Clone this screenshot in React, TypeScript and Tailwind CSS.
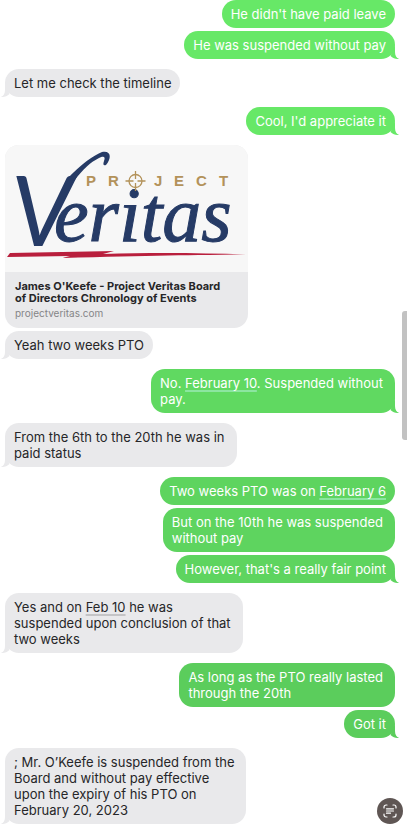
import type { ReactNode } from "react";

const tones = {
  gray: "bg-[#e9e9eb] fill-[#e9e9eb] text-[#262628]",
  lime: "bg-[#67e867] fill-[#67e867] text-white",
  green: "bg-[#60d961] fill-[#60d961] text-white",
  leaf: "bg-[#5ed45f] fill-[#5ed45f] text-white",
  deep: "bg-[#5bcd5c] fill-[#5bcd5c] text-white",
};

type BubbleProps = {
  tone: keyof typeof tones;
  tail?: boolean;
  multiline?: boolean;
  children: ReactNode;
};

function Bubble({ tone, tail, multiline, children }: BubbleProps) {
  const received = tone === "gray";
  return (
    <div
      className={`relative w-fit rounded-[14px] py-1.5 pl-[9px] ${multiline ? "pr-3" : "pr-[9px]"} ${
        received ? "self-start" : "self-end"
      } ${tones[tone]}`}
    >
      <p className="whitespace-nowrap">{children}</p>
      {tail && (
        <svg
          aria-hidden="true"
          viewBox="0 0 14 14"
          className={`absolute bottom-0 size-3.5 ${received ? "-left-1 -scale-x-100" : "-right-1"}`}
        >
          <path d="M10 0V7C10 10.500 11.500 13 14 13.800C11.500 14.400 8 13.500 5.500 11Z" />
        </svg>
      )}
    </div>
  );
}

function DateLink({ sent, children }: { sent?: boolean; children: ReactNode }) {
  return (
    <a
      href="#date"
      className={`underline decoration-2 underline-offset-2 [text-decoration-skip-ink:none] ${
        sent ? "decoration-[#8be6a0]" : "decoration-[#c4c4c6]"
      }`}
    >
      {children}
    </a>
  );
}

function Logo() {
  return (
    <svg viewBox="0 0 243 127" className="block w-full bg-[#f7f7f7]" role="img" aria-label="Project Veritas">
      <g fill="#263b66" stroke="#263b66" fontStyle="italic">
        <text x="6" y="101" fontFamily="Lato, sans-serif" fontSize="98" strokeWidth="0">V</text>
        <text x="49" y="96" fontFamily="'Liberation Serif', serif" fontSize="78" strokeWidth="1">eritas</text>
      </g>
      <path
        d="M62 34C76 19 89 10 97 7C106 5 107 13 101 20C98 21 98 19 99 16C101 11 98 11 94 13C86 17 78 24 69 36Z"
        fill="#263b66"
      />
      <g fill="#b3925a" fontFamily="'Liberation Sans', sans-serif" fontWeight="bold" fontSize="15">
        <text x="81 103" y="41">PR</text>
        <text x="149 169 191 214" y="41">JECT</text>
      </g>
      <g fill="none" stroke="#b3925a" strokeWidth="1.300">
        <circle cx="130.500" cy="36" r="6.500" />
        <path d="M130.500 26v8M130.500 38v8M120.500 36h8M132.500 36h8" />
      </g>
      <path
        d="M5 108L109 106L98 109C150 107.500 195 108 241 109.500C190 110 145 110.500 57 113L65 111L2 112Z"
        fill="#b91f3d"
      />
    </svg>
  );
}

function LinkCard() {
  return (
    <a href="#projectveritas" className="block w-[243px] self-start overflow-hidden rounded-[14px] bg-[#e9e9eb]">
      <Logo />
      <div className="px-2.5 pt-2 pb-2">
        <h2 className="text-[11px] leading-3 font-bold whitespace-nowrap text-[#262628]">
          James O'Keefe - Project Veritas Board
          <br />
          of Directors Chronology of Events
        </h2>
        <p className="mt-[3px] mb-px text-[10px] leading-3 text-[#858587]">projectveritas.com</p>
      </div>
    </a>
  );
}

function Group({ children }: { children: ReactNode }) {
  return <section className="flex flex-col gap-[3px]">{children}</section>;
}

export default function App() {
  return (
    <main className="relative flex flex-col gap-2.5 bg-white pr-3 pb-1 pl-[5px] font-['Inter',sans-serif] text-[13px] leading-4">
      <Group>
        <Bubble tone="lime">He didn't have paid leave</Bubble>
        <Bubble tone="lime" tail>He was suspended without pay</Bubble>
      </Group>
      <Group>
        <Bubble tone="gray" tail>Let me check the timeline</Bubble>
      </Group>
      <Group>
        <Bubble tone="lime" tail>Cool, I'd appreciate it</Bubble>
      </Group>
      <Group>
        <LinkCard />
        <Bubble tone="gray" tail>Yeah two weeks PTO</Bubble>
      </Group>
      <Group>
        <Bubble tone="green" tail multiline>
          No. <DateLink sent>February 10</DateLink>. Suspended without
          <br />
          pay.
        </Bubble>
      </Group>
      <Group>
        <Bubble tone="gray" tail multiline>
          From the 6th to the 20th he was in
          <br />
          paid status
        </Bubble>
      </Group>
      <Group>
        <Bubble tone="leaf">
          Two weeks PTO was on <DateLink sent>February 6</DateLink>
        </Bubble>
        <Bubble tone="leaf" multiline>
          But on the 10th he was suspended
          <br />
          without pay
        </Bubble>
        <Bubble tone="leaf" tail>However, that's a really fair point</Bubble>
      </Group>
      <Group>
        <Bubble tone="gray" tail multiline>
          Yes and on <DateLink>Feb 10</DateLink> he was
          <br />
          suspended upon conclusion of that
          <br />
          two weeks
        </Bubble>
      </Group>
      <Group>
        <Bubble tone="deep" multiline>
          As long as the PTO really lasted
          <br />
          through the 20th
        </Bubble>
        <Bubble tone="deep" tail>Got it</Bubble>
      </Group>
      <Group>
        <Bubble tone="gray" tail multiline>
          ; Mr. O’Keefe is suspended from the
          <br />
          Board and without pay effective
          <br />
          upon the expiry of his PTO on
          <br />
          February 20, 2023
        </Bubble>
      </Group>

      <div className="absolute top-[311px] right-0 h-[129px] w-[5px] rounded-l-[3px] bg-[#c2c2c2]" />

      <button
        type="button"
        aria-label="Scan text"
        className="absolute right-1 bottom-1 flex size-[26px] items-center justify-center rounded-full bg-[#5f5654]"
      >
        <svg
          viewBox="0 0 14 14"
          className="size-3.5"
          fill="none"
          stroke="white"
          strokeWidth="1.200"
          strokeLinecap="round"
        >
          <path d="M1 4V3a2 2 0 0 1 2-2h1M10 1h1a2 2 0 0 1 2 2v1M13 10v1a2 2 0 0 1-2 2h-1M4 13H3a2 2 0 0 1-2-2v-1" />
          <path d="M3.500 4.800h7M3.500 7h7M3.500 9.200h4" />
        </svg>
      </button>
    </main>
  );
}
